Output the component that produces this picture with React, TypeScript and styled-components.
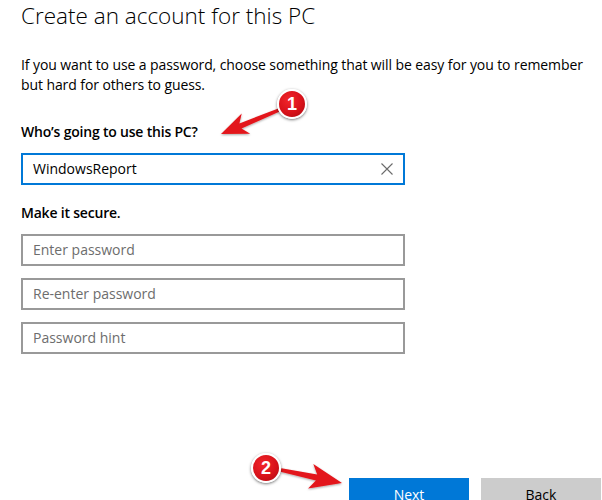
import React from "react";
import styled, { createGlobalStyle } from "styled-components";

const GlobalStyle = createGlobalStyle`
  html, body {
    margin: 0;
    padding: 0;
    background: #ffffff;
    overflow: hidden;
  }
  body {
    font-family: "Open Sans", "Noto Sans", "Liberation Sans", sans-serif;
    color: #000000;
  }
`;

const Page = styled.div`
  position: relative;
  width: 602px;
  height: 500px;
  overflow: hidden;
  background: #ffffff;
`;

const Content = styled.div`
  display: flex;
  flex-direction: column;
  padding: 0 0 0 21px;
  width: 384px;
`;

const Title = styled.h1`
  margin: 0;
  font-size: 22.5px;
  font-weight: 300;
  line-height: 32px;
  color: #000;
  white-space: nowrap;
`;

const Intro = styled.p`
  margin: 23px 0 0 0;
  width: 580px;
  font-size: 14px;
  letter-spacing: -0.09px;
  line-height: 20px;
  color: #000;
`;

const Label = styled.div<{ $gap: number }>`
  margin-top: ${(p) => p.$gap}px;
  font-size: 14px;
  font-weight: 600;
  letter-spacing: -0.2px;
  line-height: 20px;
  color: #000;
`;

const Fields = styled.div<{ $gap: number }>`
  display: flex;
  flex-direction: column;
  gap: 12px;
  margin-top: ${(p) => p.$gap}px;
`;

const Field = styled.div<{ $active?: boolean }>`
  box-sizing: border-box;
  display: flex;
  align-items: center;
  height: 32px;
  width: 384px;
  padding: 0 10px 0 10px;
  border: 2px solid ${(p) => (p.$active ? "#0078d7" : "#999999")};
  background: #fff;
`;

const FieldText = styled.span<{ $placeholder?: boolean }>`
  flex: 1;
  font-size: 14px;
  line-height: 20px;
  color: ${(p) => (p.$placeholder ? "#6d6d6d" : "#000")};
`;

const ClearIcon = styled.svg`
  width: 12px;
  height: 12px;
`;

const ButtonRow = styled.div`
  display: flex;
  justify-content: flex-end;
  gap: 12px;
  padding-right: 1px;
  margin-top: 124px;
`;

const Button = styled.div<{ $primary?: boolean }>`
  box-sizing: border-box;
  width: 120px;
  height: 32px;
  display: flex;
  align-items: center;
  justify-content: center;
  font-size: 14px;
  color: ${(p) => (p.$primary ? "#ffffff" : "#000000")};
  background: ${(p) => (p.$primary ? "#0078d7" : "#cccccc")};
`;

const Overlay = styled.svg`
  position: absolute;
  left: 0;
  top: 0;
  width: 602px;
  height: 500px;
  pointer-events: none;
`;

const Badge = styled.div<{ $x: number; $y: number }>`
  position: absolute;
  left: ${(p) => p.$x - 15}px;
  top: ${(p) => p.$y - 15}px;
  box-sizing: border-box;
  width: 30px;
  height: 30px;
  border-radius: 50%;
  border: 2px solid #ffffff;
  background: radial-gradient(circle at 40% 35%, #f2262b 0%, #d8121a 55%, #a90a10 100%);
  box-shadow: 0 1px 3px rgba(0, 0, 0, 0.55);
  display: flex;
  align-items: center;
  justify-content: center;
  font-family: "Liberation Sans", Arial, sans-serif;
  font-weight: 700;
  font-size: 18px;
  color: #ffffff;
`;

function arrowPoints(
  sx: number,
  sy: number,
  tx: number,
  ty: number,
  headLen: number,
  headHalf: number,
  w0: number,
  w1: number
) {
  const dx = tx - sx;
  const dy = ty - sy;
  const len = Math.hypot(dx, dy);
  const ux = dx / len;
  const uy = dy / len;
  const px = -uy;
  const py = ux;
  const local: [number, number][] = [
    [0, -w0 / 2],
    [len - headLen + 4, -w1 / 2],
    [len - headLen - 2, -headHalf],
    [len, 0],
    [len - headLen - 2, headHalf],
    [len - headLen + 4, w1 / 2],
    [0, w0 / 2],
  ];
  return local
    .map(([a, b]) => `${(sx + ux * a + px * b).toFixed(1)},${(sy + uy * a + py * b).toFixed(1)}`)
    .join(" ");
}

export default function App() {
  return (
    <Page>
      <GlobalStyle />
      <Content>
        <Title>Create an account for this PC</Title>
        <Intro>
          If you want to use a password, choose something that will be easy for you to remember
          <br />
          but hard for others to guess.
        </Intro>
        <Label $gap={27}>Who’s going to use this PC?</Label>
        <Fields $gap={11}>
          <Field $active>
            <FieldText>WindowsReport</FieldText>
            <ClearIcon viewBox="0 0 12 12">
              <path d="M0.5 0.5 L11.5 11.5 M11.5 0.5 L0.5 11.5" stroke="#6b6b6b" strokeWidth="1.1" fill="none" />
            </ClearIcon>
          </Field>
        </Fields>
        <Label $gap={18}>Make it secure.</Label>
        <Fields $gap={11}>
          <Field>
            <FieldText $placeholder>Enter password</FieldText>
          </Field>
          <Field>
            <FieldText $placeholder>Re-enter password</FieldText>
          </Field>
          <Field>
            <FieldText $placeholder>Password hint</FieldText>
          </Field>
        </Fields>
      </Content>
      <ButtonRow>
        <Button $primary>Next</Button>
        <Button>Back</Button>
      </ButtonRow>
      <Overlay viewBox="0 0 602 500">
        <defs>
          <filter id="ash" x="-20%" y="-20%" width="140%" height="140%">
            <feDropShadow dx="0" dy="1" stdDeviation="0.8" floodColor="#000" floodOpacity="0.35" />
          </filter>
        </defs>
        <polygon
          points={arrowPoints(279, 110, 221, 134, 25, 11, 3.5, 5.5)}
          fill="#e3151b"
          filter="url(#ash)"
        />
        <polygon
          points={arrowPoints(281, 470, 342, 483, 30, 12.5, 3.5, 6)}
          fill="#e3151b"
          filter="url(#ash)"
        />
      </Overlay>
      <Badge $x={292} $y={104}>1</Badge>
      <Badge $x={266} $y={468}>2</Badge>
    </Page>
  );
}
